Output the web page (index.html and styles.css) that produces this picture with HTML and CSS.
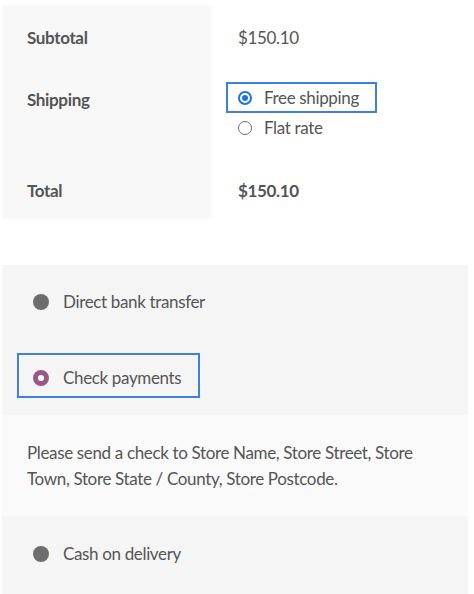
FILE: index.html
```html
<!DOCTYPE html>
<html>
<head>
<meta charset="utf-8">
<link rel="stylesheet" href="styles.css">
</head>
<body>
<div class="page">
  <div class="totals">
    <div class="row row-subtotal">
      <div class="th">Subtotal</div>
      <div class="td">$150.10</div>
    </div>
    <div class="row row-shipping">
      <div class="th">Shipping</div>
      <div class="td">
        <div class="ship-list">
          <div class="ship-opt focused"><span class="radio checked"></span><span>Free shipping</span></div>
          <div class="ship-opt"><span class="radio"></span><span>Flat rate</span></div>
        </div>
      </div>
    </div>
    <div class="row row-total">
      <div class="th">Total</div>
      <div class="td strong">$150.10</div>
    </div>
  </div>

  <div class="payment">
    <div class="pay-item first">
      <div class="pay-label"><span class="dot"></span><span>Direct bank transfer</span></div>
    </div>
    <div class="pay-item second">
      <div class="pay-label focused"><span class="dot selected"></span><span>Check payments</span></div>
    </div>
    <div class="pay-desc">Please send a check to Store Name, Store Street, Store Town, Store State / County, Store Postcode.</div>
    <div class="pay-item third">
      <div class="pay-label"><span class="dot"></span><span>Cash on delivery</span></div>
    </div>
  </div>
</div>
</body>
</html>
```

FILE: styles.css
```css
html, body {
  margin: 0;
  padding: 0;
  background: #ffffff;
}
body {
  font-family: "Lato", "Open Sans", sans-serif;
  font-size: 17px;
  letter-spacing: -0.35px;
  line-height: 24px;
  color: #555555;
}
.page {
  width: 474px;
  height: 594px;
  overflow: hidden;
  padding-top: 5px;
  box-sizing: border-box;
}
.totals {
  margin-left: 2px;
  width: 466px;
}
.row {
  display: flex;
}
.th {
  width: 185px;
  flex: none;
  background: #f8f8f8;
  padding-left: 25px;
  font-weight: 700;
  color: #555555;
}
.td {
  flex: 1;
  padding-left: 26px;
}
.td.strong {
  font-weight: 700;
  color: #555555;
}
.row-subtotal .th, .row-subtotal .td {
  padding-top: 21px;
  padding-bottom: 19px;
}
.row-shipping .th {
  padding-top: 19px;
  padding-bottom: 18px;
}
.row-shipping .td {
  padding-left: 14px;
  padding-top: 13px;
  padding-bottom: 18px;
}
.row-total .th, .row-total .td {
  padding-top: 21px;
  padding-bottom: 16px;
}
.ship-list {
  display: flex;
  flex-direction: column;
  gap: 3px;
}
.ship-opt {
  display: flex;
  align-items: center;
  gap: 12px;
  padding: 0 0 0 12px;
  width: max-content;
}
.ship-opt.focused {
  border: 2px solid #3f80dc;
  padding: 2px 16px 1px 10px;
}
.radio {
  width: 14px;
  height: 14px;
  box-sizing: border-box;
  border-radius: 50%;
  border: 1px solid #6f6f6f;
  background: #fff;
  flex: none;
  position: relative;
}
.radio.checked {
  border: 2px solid #1a73e8;
}
.radio.checked::after {
  content: "";
  position: absolute;
  left: 2px;
  top: 2px;
  width: 6px;
  height: 6px;
  border-radius: 50%;
  background: #1a73e8;
}

.payment {
  margin: 46px 0 0 2px;
  width: 466px;
  background: #f5f5f5;
  height: 340px;
}
.pay-item {
  padding-left: 15px;
}
.pay-item.first {
  padding-top: 23px;
  padding-bottom: 24px;
}
.pay-item.second {
  padding-top: 13px;
  padding-bottom: 17px;
}
.pay-item.third {
  padding-top: 24px;
}
.pay-label {
  display: flex;
  align-items: center;
  gap: 14px;
  padding: 0 0 0 14px;
  border: 2px solid transparent;
  width: max-content;
}
.pay-label.focused {
  border-color: #3f80dc;
  padding: 11px 17px 6px 14px;
}
.dot {
  width: 16px;
  height: 16px;
  border-radius: 50%;
  background: #6d6d6d;
  flex: none;
  box-sizing: border-box;
}
.dot.selected {
  background: #ffffff;
  border: 5px solid #96588a;
}
.pay-desc {
  background: #fafafa;
  padding: 25px 40px 24px 25px;
  line-height: 26px;
}
```
